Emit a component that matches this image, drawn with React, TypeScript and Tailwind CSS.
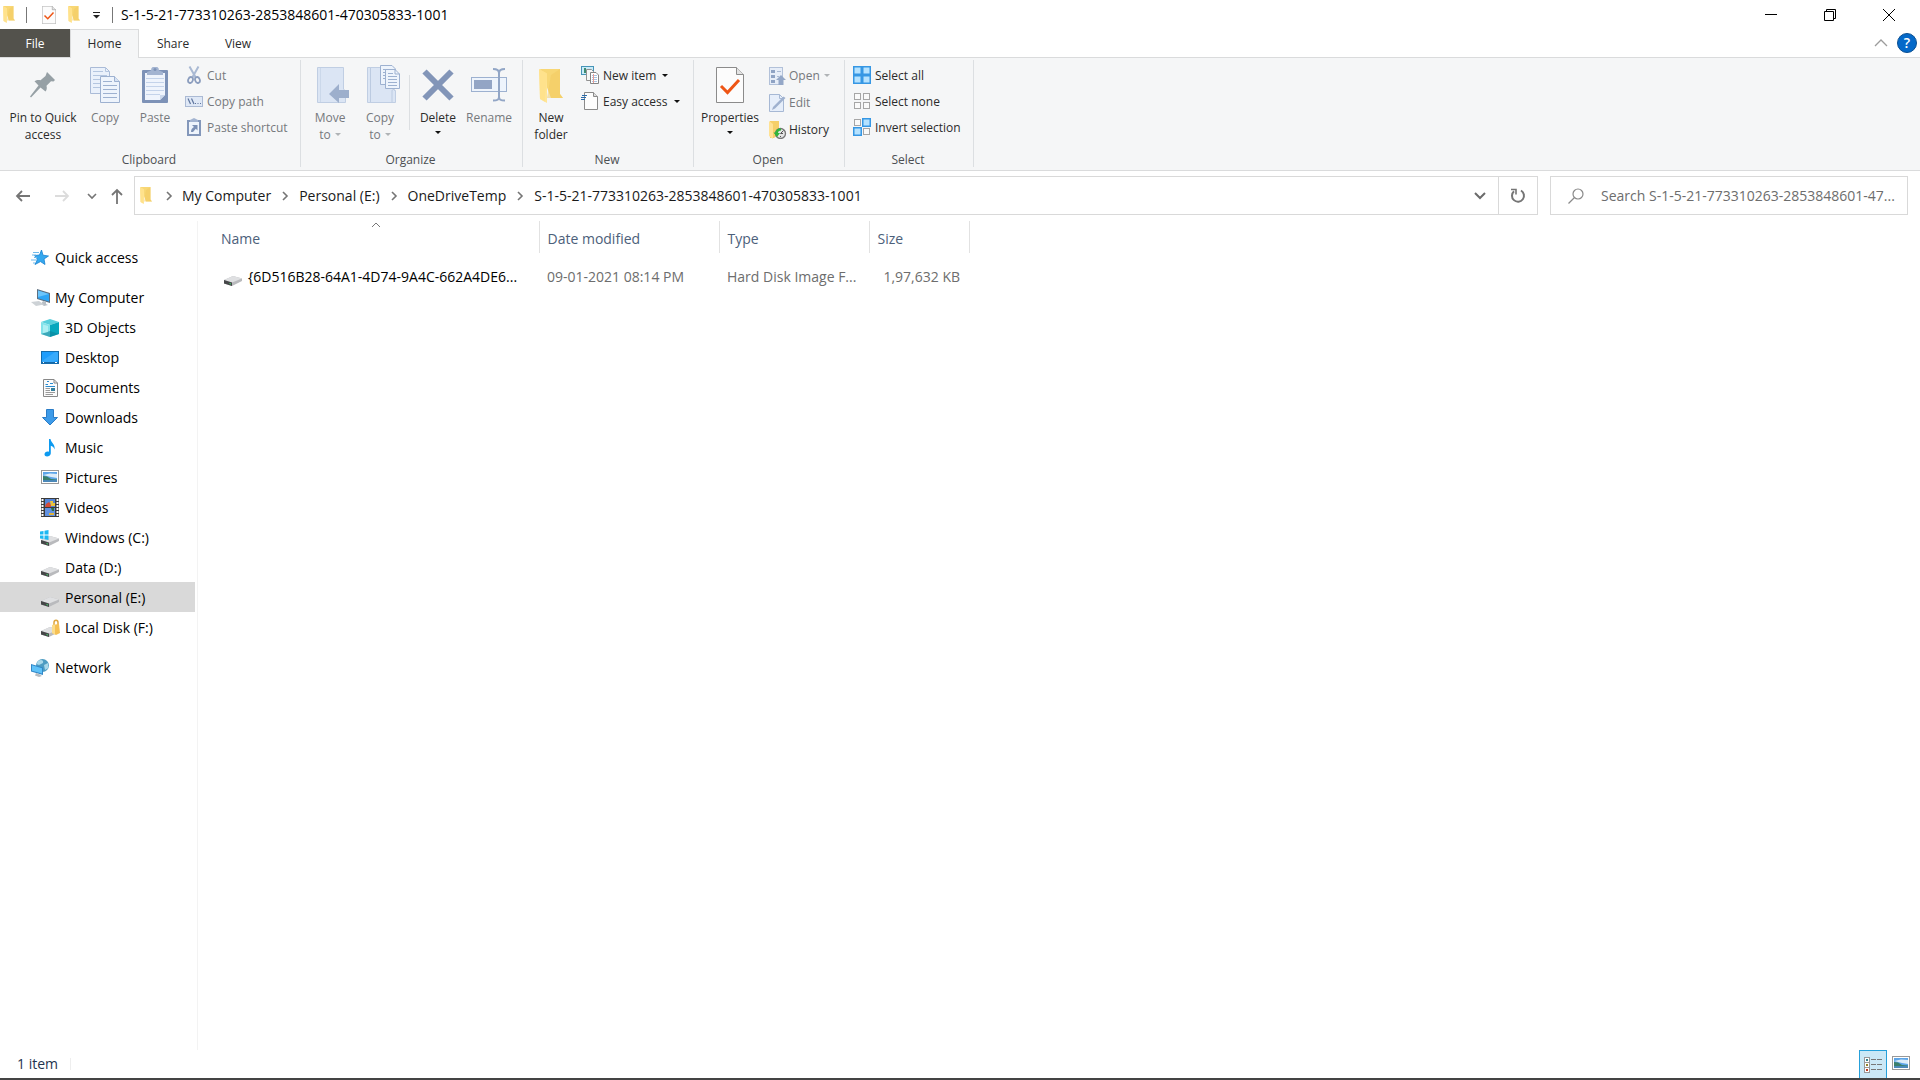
import React from 'react';

type IconProps = { className?: string };

const FolderIcon: React.FC<IconProps> = ({ className = 'w-3 h-[17px]' }) => (
  <svg viewBox="0 0 24 34" preserveAspectRatio="none" className={className}>
    <path d="M1 0H21V25L24 29H12Z" fill="#f8d775" />
    <path d="M12 6L21 0V25L24 29H8Z" fill="#f2ca60" opacity=".5" />
    <path d="M0 0L8 4.500V34L1 30Z" fill="#ffe596" />
    <path d="M0 0L8 4.500V10L6 26V33L1 30Z" fill="#ffdf85" opacity=".6" />
  </svg>
);

const CheckPageIcon: React.FC<IconProps> = ({ className = 'w-[14px] h-[18px]' }) => (
  <svg viewBox="0 0 28 36" className={className}>
    <path d="M.5 .5H20.500L27.500 7.500V35.500H.5Z" fill="#fcfcfc" stroke="#8b8b8b" />
    <path d="M20.500 .5V7.500H27.500" fill="#e3e3e3" stroke="#8b8b8b" />
    <path d="M5 19L11.500 25.500L23 13" fill="none" stroke="#ee5515" strokeWidth="3" />
  </svg>
);

const Caret: React.FC<{ muted?: boolean }> = ({ muted }) => (
  <svg viewBox="0 0 6 3" className="inline-block shrink-0 w-[6px] h-[3px]">
    <path d="M0 0H6L3 3Z" fill={muted ? '#b0b3b6' : '#111'} />
  </svg>
);

const PinIcon = () => (
  <svg viewBox="0 0 28 36" className="w-7 h-9">
    <path d="M18 5L26 13L24.500 14.500L22 14.300L17.500 18.800C18.300 21.500 17.500 23.500 16.500 24.500L11.500 20.500L2 30.500L1 29.500L9.500 18.500L5.500 14.300C7.500 12.800 9.800 12.800 11.500 13.300L16.500 9Z" fill="#96a0a5" />
  </svg>
);

const CopyIcon = () => (
  <svg viewBox="0 0 30 36" className="w-[30px] h-9">
    <path d="M.5 .5H15.500L19.500 4.500V26.500H.5Z" fill="#eaf1fb" stroke="#aabbd7" />
    <path d="M15.500 .5V4.500H19.500M3 4.500H13M3 8.500H17M3 12.500H10M3 16.500H10M3 20.500H10" fill="none" stroke="#b4c6e0" />
    <path d="M10.500 9.500H24.500L29.500 14.500V35.500H10.500Z" fill="#eef4fc" stroke="#9db1d0" />
    <path d="M24.500 9.500V14.500H29.500" fill="#d8e3f3" stroke="#9db1d0" />
    <path d="M13 14.500H22M13 18.500H27M13 22.500H27M13 26.500H27M13 30.500H27" stroke="#9db1d0" />
  </svg>
);

const PasteIcon = () => (
  <svg viewBox="0 0 26 36" className="w-[26px] h-9">
    <rect y="3" width="26" height="33" rx="1" fill="#7d92b7" />
    <path d="M3 6H23V28L18 33H3Z" fill="#eff4fc" />
    <path d="M18 33V28H23Z" fill="#cbd8ec" />
    <path d="M4 11.500H22M4 15.500H22M4 19.500H22M4 23.500H22M4 27.500H18" stroke="#c4d3ea" />
    <path d="M5 8V5L9 3.500A4 4 0 0 1 17 3.500L21 5V8Z" fill="#a3b4d1" />
    <circle cx="13" cy="2.500" r="1.500" fill="#7d92b7" />
  </svg>
);

const MoveToIcon = () => (
  <svg viewBox="0 0 32 36" className="w-8 h-9 ml-[6px]">
    <path d="M.5 .5H26.500V22L28.500 24V35.500H.5Z" fill="#dbe5f4" stroke="#c0cee3" />
    <path d="M3.500 1V35" stroke="#cbd8ea" />
    <path d="M12 27L22 17V23H32V31H22V36Z" fill="#9dafcc" />
  </svg>
);

const CopyToIcon = () => (
  <svg viewBox="0 0 34 38" className="w-[34px] h-[38px] ml-[6px]">
    <path d="M1.500 2.500H27.500V24L29.500 26V37.500H1.500Z" fill="#dbe5f4" stroke="#c0cee3" />
    <path d="M4.500 3V37M26 37V26C26 24 29 24 29 26" fill="none" stroke="#bccbe1" />
    <path d="M14.500 .5H26L29.500 4V19.500H14.500Z" fill="#eef4fc" stroke="#9db1d0" />
    <path d="M17 4.500H25M17 7.500H20M17 10.500H19M17 13.500H19" stroke="#9db1d0" />
    <path d="M19.500 4.500H29L33.500 9V23.500H19.500Z" fill="#eef4fc" stroke="#9db1d0" />
    <path d="M29 4.500V9H33.500M22 8.500H27M22 11.500H31M22 14.500H31M22 17.500H31M22 20.500H31" fill="none" stroke="#9db1d0" />
  </svg>
);

const DeleteIcon = () => (
  <svg viewBox="0 0 32 36" className="w-8 h-9">
    <path d="M2.500 4.500L29.500 31.500M29.500 4.500L2.500 31.500" stroke="#8295b8" strokeWidth="6" />
  </svg>
);

const RenameIcon = () => (
  <svg viewBox="0 0 36 36" className="w-9 h-9">
    <rect x=".5" y="10.500" width="35" height="14" fill="#eef4fc" stroke="#9db1d0" />
    <rect x="3" y="13" width="18" height="9" fill="#93a5c5" />
    <path d="M22 2C26 2 28 3 28 6V30C28 33 26 33.500 22 33.500M34 2C30 2 28 3 28 6V30C28 33 30 33.500 34 33.500" fill="none" stroke="#92a6c6" strokeWidth="2" />
  </svg>
);

const CutIcon = () => (
  <svg viewBox="0 0 18 18" className="w-[18px] h-[18px]">
    <path d="M4.500 .5L11 12M13.500 .5L7 12" fill="none" stroke="#a9b9d3" strokeWidth="2" />
    <ellipse cx="5.500" cy="14" rx="2.300" ry="3" fill="none" stroke="#8b9dbe" strokeWidth="1.800" transform="rotate(20 5.500 14)" />
    <ellipse cx="12.500" cy="14" rx="2.300" ry="3" fill="none" stroke="#8b9dbe" strokeWidth="1.800" transform="rotate(-20 12.500 14)" />
  </svg>
);

const CopyPathIcon = () => (
  <svg viewBox="0 0 18 18" className="w-[18px] h-[18px]">
    <rect x=".5" y="4.500" width="17" height="10" fill="#dfe8f6" stroke="#abbad4" />
    <path d="M3 6.500L5.500 12M6.500 6.500L9 12" stroke="#5f759e" strokeWidth="1.200" />
    <path d="M10 11.500H11M12.500 11.500H13.500M15 11.500H16" stroke="#5f759e" />
  </svg>
);

const PasteShortcutIcon = () => (
  <svg viewBox="0 0 18 18" className="w-[18px] h-[18px]">
    <path d="M2 2H16V18H2Z" fill="#8397ba" />
    <path d="M4 4H14V16H4Z" fill="#eef4fc" />
    <path d="M5 4V2L9 0L13 2V4Z" fill="#a3b4d1" />
    <path d="M7 7H12.500V12.500L10.800 10.800L8 14H6C6 11 7.500 10 9 9Z" fill="#7b90b5" />
  </svg>
);

const NewItemIcon = () => (
  <svg viewBox="0 0 18 18" className="w-[18px] h-[18px]">
    <rect x=".5" y=".5" width="12" height="8" fill="#c9ebf8" stroke="#4694b8" />
    <path d="M3 2V7H5V2Z" fill="#3f8c72" />
    <path d="M5.500 3.500H10.500L12.500 5.500V14.500H5.500Z" fill="#f7f7f7" stroke="#929292" />
    <path d="M9.500 6.500H15L17.500 9V17.500H9.500Z" fill="#fff" stroke="#858585" />
    <path d="M11 9.500H16M11 11.500H16M11 13.500H16M11 15.500H16" stroke="#a8c3e0" />
    <path d="M12.500 8V17" stroke="#e99c96" />
  </svg>
);

const EasyAccessIcon = () => (
  <svg viewBox="0 0 18 18" className="w-[18px] h-[18px]">
    <path d="M3.500 .5H12.500L16.500 4.500V17.500H3.500Z" fill="#fdfdfd" stroke="#8a8a8a" />
    <path d="M12.500 .5V4.500H16.500" fill="#ddd" stroke="#8a8a8a" />
    <path d="M1 3.500H6M0 5.500H5M0 7.500H4" stroke="#2b6cab" strokeWidth="1.200" />
  </svg>
);

const OpenIcon = () => (
  <svg viewBox="0 0 18 18" className="w-[18px] h-[18px]">
    <rect x=".5" y=".5" width="13" height="17" fill="#e6edf8" stroke="#b2c1d9" />
    <path d="M2 3H6V6H2ZM2 8H6V11H2ZM2 13H6V16H2Z" fill="#8fa3c4" />
    <path d="M8 4.500H12M8 9.500H10" stroke="#a9b9d3" />
    <path d="M12 8L17 13H14.500V18H9.500V13H7Z" fill="#94a7c7" />
  </svg>
);

const EditIcon = () => (
  <svg viewBox="0 0 18 18" className="w-[18px] h-[18px]">
    <path d="M.5 .5H10.500L14.500 4.500V17.500H.5Z" fill="#e6eefa" stroke="#a6b8d4" />
    <path d="M10.500 .5V4.500H14.500" fill="none" stroke="#a6b8d4" />
    <path d="M3 16L4 13L14.500 2.500L16.500 4L6 14.500Z" fill="#9fb1cf" />
  </svg>
);

const HistoryIcon = () => (
  <svg viewBox="0 0 18 18" className="w-[18px] h-[18px]">
    <path d="M1 0H10V13L5 17H1Z" fill="#f5cf69" />
    <path d="M0 0L4 3V18L0 15Z" fill="#ffe294" />
    <circle cx="11.500" cy="12.500" r="5" fill="#e4e4e4" stroke="#777" strokeWidth="1.300" />
    <path d="M11.500 12.500L14.500 9.500M11.500 12.500H14M11.500 15V16" stroke="#555" />
    <path d="M12 7.500C8.500 7 6.500 9 6.500 11.500H4.500L8 16L11 12H9C9 10.500 10 9.500 12 9.500Z" fill="#2fb53a" />
  </svg>
);

const SelectIcon: React.FC<{ on: boolean[] }> = ({ on }) => (
  <svg viewBox="0 0 18 18" className="w-[18px] h-[18px]">
    {on.map((active, i) => {
      const col = i % 2;
      const row = Math.floor(i / 2);
      return active ? (
        <rect key={i} x={col * 9 + 0.75} y={row * 9 + 0.75} width="7.500" height="7.500" fill="#b5e2ff" stroke="#3697e4" strokeWidth="1.500" />
      ) : (
        <rect key={i} x={col * 9 + 1.5} y={row * 9 + 1.5} width="6" height="6" fill="#fafafa" stroke="#a6a6a6" />
      );
    })}
  </svg>
);

const DriveShape = () => (
  <g>
    <path d="M0 12L9 8L18 10.500V13L8 18L0 15.500Z" fill="#b9babd" />
    <path d="M0 12L9 8L18 10.500L8 14.500Z" fill="#dfe0e2" />
    <path d="M0 12L8 14.500V18L0 15.500Z" fill="#454748" />
    <path d="M5.500 15L7 15.500V16.500L5.500 16Z" fill="#44d96d" />
  </g>
);

const DriveIcon = () => (
  <svg viewBox="0 0 18 18" className="w-[18px] h-[18px]">
    <DriveShape />
  </svg>
);

const WindowsDriveIcon = () => (
  <svg viewBox="0 0 18 18" className="w-[18px] h-[18px] overflow-visible">
    <g transform="translate(0 -1)"><DriveShape /></g>
    <path d="M-1 2.500L2.500 2V5.500H-1ZM3.500 1.800L7.500 1V5.500H3.500ZM-1 6.500H2.500V10L-1 9.500ZM3.500 6.500H7.500V11L3.500 10.200Z" fill="#1cb8f2" />
  </svg>
);

const LockedDriveIcon = () => (
  <svg viewBox="0 0 18 18" className="w-[18px] h-[18px] overflow-visible">
    <DriveShape />
    <path d="M13 7V3.500C13 .5 17 .5 17 3.500V7" fill="none" stroke="#dfa63e" strokeWidth="1.500" />
    <path d="M11 6L18 5L19 14L15 16L11 14Z" fill="#f5c053" />
    <path d="M11 6L14 5.500V15.500L11 14Z" fill="#fbdc8a" />
  </svg>
);

const QuickAccessIcon = () => (
  <svg viewBox="0 0 18 18" className="w-[18px] h-[18px]">
    <path d="M10.500 1L12 6.200L17.500 7L13 10L14 15.500L9.500 12.600L4 15.500L6.500 10.300L3.500 6.500L8.500 6Z" fill="#35a8ef" stroke="#1681d0" strokeWidth=".8" />
    <path d="M2 3.500H8M1 6H5M3 8.500H6M0 11H6M2 14H4" stroke="#6fb9ea" />
  </svg>
);

const ComputerIcon = () => (
  <svg viewBox="0 0 20 18" className="w-5 h-[18px]">
    <path d="M6 0L19 4V14L6 10Z" fill="#5d6f80" />
    <path d="M7 1.500L18 5V12.500L7 9.200Z" fill="#2ea5f5" />
    <path d="M7 1.500L18 5L7 8Z" fill="#6cc5fb" />
    <path d="M12 12L15 13V15L17 16L13 17L10 15Z" fill="#b9bfc5" />
    <path d="M0 13L8 12L13 15.500L5 17Z" fill="#cdd2d6" />
  </svg>
);

const ObjectsIcon = () => (
  <svg viewBox="0 0 18 18" className="w-[18px] h-[18px]">
    <path d="M0 3L9 0L18 3L9 6Z" fill="#58cfdc" />
    <path d="M0 3L9 6V18L0 15Z" fill="#82e2ea" />
    <path d="M18 3L9 6V18L18 15Z" fill="#08a7bd" />
    <path d="M9 12L18 15L9 18L0 15Z" fill="#0b8299" opacity=".6" />
    <path d="M2 5.500L7 7V13L2 14Z" fill="#b9f2f5" opacity=".8" />
  </svg>
);

const DesktopIcon = () => (
  <svg viewBox="0 0 18 18" className="w-[18px] h-[18px]">
    <rect x=".5" y="2.500" width="17" height="12" fill="#1f9dfb" stroke="#156bab" />
    <path d="M1 12L14 3H17V11L10 14H1Z" fill="#4ab2fc" opacity=".6" />
    <path d="M1 13.500H17" stroke="#1467a6" />
    <path d="M2 13.500H3M14 13.500H16" stroke="#fff" />
  </svg>
);

const DocumentsIcon = () => (
  <svg viewBox="0 0 18 18" className="w-[18px] h-[18px]">
    <path d="M2.500 .5H13L16.500 4V17.500H2.500Z" fill="#fbfbfb" stroke="#888" />
    <path d="M13 .5V4H16.500" fill="none" stroke="#888" />
    <path d="M6 2.500H8M9 4.500H12M4.500 5.500H7M4.500 7.500H14" stroke="#2a8bd0" />
    <path d="M4.500 9.500H9M4.500 11.500H9M4.500 13.500H14M4.500 15.500H12" stroke="#9a9a9a" />
    <rect x="10" y="9" width="4" height="3" fill="#357f9c" />
  </svg>
);

const DownloadsIcon = () => (
  <svg viewBox="0 0 18 18" className="w-[18px] h-[18px]">
    <path d="M5.500 .5H12.500V8.500H16.500L9 16L1.500 8.500H5.500Z" fill="#3d9be9" stroke="#2a7cc7" />
  </svg>
);

const MusicIcon = () => (
  <svg viewBox="0 0 18 18" className="w-[18px] h-[18px]">
    <path d="M8 0H9.500C10 4 14.500 5 13.500 10.500C13 8.500 11.500 7 9.800 6.800V14.500C9.500 18 3.500 18.500 3.500 15.500C3.500 13 6 12 8 12.800Z" fill="#0c9af0" />
  </svg>
);

const PicturesIcon: React.FC<IconProps> = ({ className = 'w-[18px] h-[18px]' }) => (
  <svg viewBox="0 0 18 18" className={className}>
    <rect x=".5" y="1.500" width="17" height="13" fill="#fff" stroke="#999" />
    <rect x="2" y="3" width="14" height="10" fill="#5da5e8" />
    <path d="M2 6L9 4.500L16 5V9L10 8Z" fill="#dcecf8" />
    <path d="M2 7L6 7.500L10 10L16 10.500V11.500H2Z" fill="#3a7f6b" />
    <path d="M2 11H16V13H2Z" fill="#4b88b8" />
  </svg>
);

const VideosIcon = () => (
  <svg viewBox="0 0 18 20" className="w-[18px] h-5">
    <rect width="18" height="19" fill="#3b3b3b" />
    <path d="M1.500 1V19M16.500 1V19" stroke="#fff" strokeWidth="2" strokeDasharray="2 1" />
    <rect x="4" y="1" width="10" height="8" fill="#5585d6" />
    <rect x="4" y="10" width="10" height="8" fill="#6292e2" />
    <path d="M5 6L8 4L10 7V9H4Z" fill="#d84a34" />
    <path d="M9 3H12V5H14V8H10Z" fill="#eac33c" />
    <path d="M8 15H13V17H8Z" fill="#e2b338" />
    <path d="M10 10H13V13H11Z" fill="#2f7140" />
  </svg>
);

const NetworkIcon = () => (
  <svg viewBox="0 0 20 18" className="w-5 h-[18px]">
    <circle cx="11.500" cy="6.500" r="6.500" fill="#4d9cc2" />
    <path d="M7 2C10 0 13 1 12 4L8 6L5.500 5ZM13 6L17 4L17.500 9L14 11Z" fill="#a9d8ea" />
    <path d="M0 5L12 8.500V16L0 12.500Z" fill="#3087c8" />
    <path d="M1 6.300L11 9.300V14.600L1 11.700Z" fill="#5fc2f8" />
    <path d="M5 14L8 15L11 17L8 18L4 16.500Z" fill="#b5bcc2" />
  </svg>
);

const DetailsIcon = () => (
  <svg viewBox="0 0 20 18" className="w-5 h-[18px]">
    {[1, 6, 11].map((y) => (
      <g key={y}>
        <rect x="1.500" y={y + 0.5} width="5" height="5" fill="#fff" stroke="#999" />
        <path d={`M8 ${y + 2.5}H13M14 ${y + 2.5}H19`} stroke="#777" />
      </g>
    ))}
    <rect x="3" y="3" width="2" height="2" fill="#33818d" />
    <rect x="3" y="8" width="2" height="2" fill="#95832c" />
    <rect x="3" y="13" width="2" height="2" fill="#c33c1e" />
  </svg>
);

const Chevron: React.FC<IconProps> = ({ className = '' }) => (
  <svg viewBox="0 0 10 10" className={`w-[10px] h-[10px] shrink-0 ${className}`}>
    <path d="M3 1L7 5L3 9" fill="none" stroke="#757575" strokeWidth="1.600" />
  </svg>
);

type BigButtonProps = {
  icon: React.ReactNode;
  width: string;
  lines: string[];
  caret?: 'inline' | 'below';
  muted?: boolean;
};

const BigButton: React.FC<BigButtonProps> = ({ icon, width, lines, caret, muted }) => (
  <button className={`flex flex-col items-center ${width} ${muted ? 'text-[#76797d]' : 'text-[#2b2b2b]'}`}>
    <span className="flex items-end justify-center h-9 mb-[6px]">{icon}</span>
    {lines.map((line, i) => (
      <span key={line} className="flex items-center gap-1 leading-[17px] whitespace-nowrap">
        {line}
        {caret === 'inline' && i === lines.length - 1 && <Caret muted={muted} />}
      </span>
    ))}
    {caret === 'below' && (
      <span className="flex items-center h-3">
        <Caret />
      </span>
    )}
  </button>
);

type SmallButtonProps = {
  icon: React.ReactNode;
  label: string;
  caret?: boolean;
  muted?: boolean;
  size?: string;
};

const SmallButton: React.FC<SmallButtonProps> = ({ icon, label, caret, muted, size = 'h-[26px] gap-1' }) => (
  <button className={`flex items-center whitespace-nowrap ${size} ${muted ? 'text-[#76797d]' : 'text-[#2b2b2b]'}`}>
    {icon}
    <span className="pt-px mr-[2px]">{label}</span>
    {caret && <Caret muted={muted} />}
  </button>
);

const RibbonGroup: React.FC<{ title: string; width: string; children: React.ReactNode }> = ({ title, width, children }) => (
  <section className={`flex flex-col justify-between border-r border-[#dcdfe2] mt-[2px] mb-[3px] ${width}`}>
    <div className="flex items-start pl-1">{children}</div>
    <h2 className="pr-[2px] text-center text-[#4c4f52] leading-[15px]">{title}</h2>
  </section>
);

const crumbs = ['My Computer', 'Personal (E:)', 'OneDriveTemp', 'S-1-5-21-773310263-2853848601-470305833-1001'];

const places = [
  { name: '3D Objects', icon: <ObjectsIcon /> },
  { name: 'Desktop', icon: <DesktopIcon /> },
  { name: 'Documents', icon: <DocumentsIcon /> },
  { name: 'Downloads', icon: <DownloadsIcon /> },
  { name: 'Music', icon: <MusicIcon /> },
  { name: 'Pictures', icon: <PicturesIcon /> },
  { name: 'Videos', icon: <VideosIcon /> },
  { name: 'Windows (C:)', icon: <WindowsDriveIcon /> },
  { name: 'Data (D:)', icon: <DriveIcon /> },
  { name: 'Personal (E:)', icon: <DriveIcon />, active: true },
  { name: 'Local Disk (F:)', icon: <LockedDriveIcon /> },
];

const TitleBar = () => (
  <header className="flex items-center h-[29px] pl-[3px] pr-[2px]">
    <FolderIcon />
    <span className="w-px h-4 ml-[11px] bg-[#777]" />
    <button aria-label="Properties" className="ml-[15px]"><CheckPageIcon /></button>
    <button aria-label="New folder" className="ml-3"><FolderIcon /></button>
    <button aria-label="Customize Quick Access Toolbar" className="ml-3">
      <svg viewBox="0 0 8 8" className="w-2 h-2">
        <path d="M1 1.500H8" stroke="#222" />
        <path d="M1 4H8L4.500 7.500Z" fill="#222" />
      </svg>
    </button>
    <span className="w-px h-4 ml-3 bg-[#777]" />
    <h1 className="ml-2 grow text-black">S-1-5-21-773310263-2853848601-470305833-1001</h1>
    <button aria-label="Minimize" className="flex items-center justify-center w-[59px] h-full">
      <svg viewBox="0 0 12 12" className="w-3 h-3"><path d="M0 5.500H12" stroke="#000" /></svg>
    </button>
    <button aria-label="Restore" className="flex items-center justify-center w-[59px] h-full">
      <svg viewBox="0 0 12 12" className="w-3 h-3">
        <path d="M.5 2.500H9.500V11.500H.5ZM2.500 2.500V.5H11.500V9.500H9.500" fill="none" stroke="#000" />
      </svg>
    </button>
    <button aria-label="Close" className="flex items-center justify-center w-[59px] h-full">
      <svg viewBox="0 0 12 12" className="w-3 h-3"><path d="M0 0L12 12M12 0L0 12" stroke="#000" /></svg>
    </button>
  </header>
);

const Tabs = () => (
  <nav className="flex items-stretch h-[29px] border-b border-[#dadbdc] text-[12px] text-[#2b2b2b]">
    <button className="w-[70px] pt-[2px] bg-[#53524c] text-white">File</button>
    <button className="w-[69px] -mb-px border border-b-0 border-[#dadbdc] bg-[#f5f6f7]">Home</button>
    <button className="w-[68px] pt-[2px]">Share</button>
    <button className="w-[62px] pt-[2px]">View</button>
    <button aria-label="Minimize the Ribbon" className="ml-auto mr-[9px]">
      <svg viewBox="0 0 14 8" className="w-[14px] h-2"><path d="M1 7L7 1L13 7" fill="none" stroke="#9c9c9c" strokeWidth="1.300" /></svg>
    </button>
    <button aria-label="Help" className="self-center mr-[3px] w-5 h-5 rounded-full border border-[#0a4f92] bg-[#0469c9] text-[14px] leading-[18px] font-semibold text-white">?</button>
  </nav>
);

const Ribbon = () => (
  <div className="flex h-[113px] border-b border-[#dadbdc] bg-[#f5f6f7] text-[12px]">
    <RibbonGroup title="Clipboard" width="w-[301px]">
      <div className="flex pt-[7px] pl-[2px]">
        <BigButton icon={<PinIcon />} width="w-[74px]" lines={['Pin to Quick', 'access']} />
        <BigButton icon={<CopyIcon />} width="w-[50px]" lines={['Copy']} muted />
        <BigButton icon={<PasteIcon />} width="w-[50px]" lines={['Paste']} muted />
      </div>
      <div className="flex flex-col items-start pl-[5px] pt-[2px]">
        <SmallButton icon={<CutIcon />} label="Cut" muted />
        <SmallButton icon={<CopyPathIcon />} label="Copy path" muted />
        <SmallButton icon={<PasteShortcutIcon />} label="Paste shortcut" muted />
      </div>
    </RibbonGroup>
    <RibbonGroup title="Organize" width="w-[222px]">
      <div className="flex pt-[7px]">
        <BigButton icon={<MoveToIcon />} width="w-[50px]" lines={['Move', 'to']} caret="inline" muted />
        <BigButton icon={<CopyToIcon />} width="w-[50px]" lines={['Copy', 'to']} caret="inline" muted />
        <span className="w-px h-[55px] mt-2 ml-1 mr-[3px] bg-[#dcdfe2]" />
        <BigButton icon={<DeleteIcon />} width="w-[50px]" lines={['Delete']} caret="below" />
        <BigButton icon={<RenameIcon />} width="w-[52px]" lines={['Rename']} muted />
      </div>
    </RibbonGroup>
    <RibbonGroup title="New" width="w-[171px]">
      <div className="flex pt-[7px]">
        <BigButton icon={<FolderIcon className="w-6 h-[34px]" />} width="w-[48px]" lines={['New', 'folder']} />
      </div>
      <div className="flex flex-col items-start pl-[6px] pt-[2px]">
        <SmallButton icon={<NewItemIcon />} label="New item" caret />
        <SmallButton icon={<EasyAccessIcon />} label="Easy access" caret />
      </div>
    </RibbonGroup>
    <RibbonGroup title="Open" width="w-[151px]">
      <div className="flex pt-[7px]">
        <BigButton icon={<CheckPageIcon className="w-7 h-9" />} width="w-[64px]" lines={['Properties']} caret="below" />
      </div>
      <div className="flex flex-col items-start pl-[7px] pt-[2px]">
        <SmallButton icon={<OpenIcon />} label="Open" size="h-[27px] gap-[2px]" caret muted />
        <SmallButton icon={<EditIcon />} label="Edit" size="h-[27px] gap-[2px]" muted />
        <SmallButton icon={<HistoryIcon />} label="History" size="h-[27px] gap-[2px]" />
      </div>
    </RibbonGroup>
    <RibbonGroup title="Select" width="w-[129px]">
      <div className="flex flex-col items-start pl-1 pt-[2px]">
        <SmallButton icon={<SelectIcon on={[true, true, true, true]} />} label="Select all" />
        <SmallButton icon={<SelectIcon on={[false, false, false, false]} />} label="Select none" />
        <SmallButton icon={<SelectIcon on={[false, true, true, false]} />} label="Invert selection" />
      </div>
    </RibbonGroup>
  </div>
);

const AddressBar = () => (
  <div className="flex items-center pt-[5px] pb-[6px] pr-3">
    <div className="flex items-center justify-between w-[134px] pl-[15px] pr-[10px]">
      <button aria-label="Back">
        <svg viewBox="0 0 16 14" className="w-4 h-[14px]"><path d="M15 7H2M7 2L2 7L7 12" fill="none" stroke="#757575" strokeWidth="1.800" /></svg>
      </button>
      <button aria-label="Forward" className="ml-[22px]">
        <svg viewBox="0 0 16 14" className="w-4 h-[14px]"><path d="M1 7H14M9 2L14 7L9 12" fill="none" stroke="#dcdcdc" strokeWidth="1.800" /></svg>
      </button>
      <button aria-label="Recent locations" className="ml-[17px]"><Chevron className="rotate-90" /></button>
      <button aria-label="Up" className="ml-3">
        <svg viewBox="0 0 14 16" className="w-[14px] h-4"><path d="M7 16V2M2 7L7 2L12 7" fill="none" stroke="#757575" strokeWidth="1.800" /></svg>
      </button>
    </div>
    <div className="flex items-center grow h-[39px] border border-[#d9d9d9] pl-[5px]">
      <FolderIcon />
      {crumbs.map((crumb, i) => (
        <React.Fragment key={crumb}>
          <Chevron className={i === 0 ? 'ml-3 mr-2' : 'mx-[9px]'} />
          <a href="#" className="whitespace-nowrap text-[#1a1a1a]">{crumb}</a>
        </React.Fragment>
      ))}
      <button aria-label="Previous locations" className="ml-auto px-3">
        <svg viewBox="0 0 12 8" className="w-3 h-2"><path d="M1 1L6 6L11 1" fill="none" stroke="#6b6b6b" strokeWidth="2" /></svg>
      </button>
      <button aria-label="Refresh" className="flex items-center justify-center w-[39px] h-full border-l border-[#d9d9d9]">
        <svg viewBox="0 0 16 16" className="w-4 h-4">
          <path d="M11 2.500A6 6 0 1 1 4 3.200" fill="none" stroke="#757575" strokeWidth="2" />
          <path d="M1 1.500H6V6.500" fill="none" stroke="#757575" strokeWidth="1.600" />
        </svg>
      </button>
    </div>
    <label className="flex items-center w-[358px] h-[39px] ml-3 border border-[#d9d9d9] pl-[17px]">
      <svg viewBox="0 0 16 16" className="w-4 h-4 shrink-0">
        <circle cx="10" cy="6" r="5" fill="none" stroke="#8a8a8a" strokeWidth="1.200" />
        <path d="M6.500 9.500L.5 15.500" stroke="#8a8a8a" strokeWidth="1.200" />
      </svg>
      <input
        type="text"
        aria-label="Search"
        placeholder="Search S-1-5-21-773310263-2853848601-47..."
        className="grow min-w-0 ml-[17px] bg-transparent outline-none placeholder:text-[#6d6d6d]"
      />
    </label>
  </div>
);

const Sidebar = () => (
  <aside className="w-[198px] shrink-0 border-r border-[#f3f3f3] pt-[21px] pr-[2px] text-black">
    <a href="#" className="flex items-center h-[30px] pl-[31px] pt-px mb-[10px]">
      <QuickAccessIcon />
      <span className="ml-[6px]">Quick access</span>
    </a>
    <a href="#" className="flex items-center h-[30px] pl-[31px] pt-px">
      <ComputerIcon />
      <span className="ml-1">My Computer</span>
    </a>
    <ul className="mb-[10px]">
      {places.map((place) => (
        <li key={place.name}>
          <a href="#" className={`flex items-center h-[30px] pl-[41px] pt-px ${place.active ? 'bg-[#d9d9d9]' : ''}`}>
            {place.icon}
            <span className="ml-[6px]">{place.name}</span>
          </a>
        </li>
      ))}
    </ul>
    <a href="#" className="flex items-center h-[30px] pl-[31px] pt-px">
      <NetworkIcon />
      <span className="ml-1">Network</span>
    </a>
  </aside>
);

const FileList = () => (
  <main className="grow">
    <table className="table-fixed w-[771px] text-left">
      <colgroup>
        <col className="w-[341px]" />
        <col className="w-[180px]" />
        <col className="w-[150px]" />
        <col className="w-[100px]" />
      </colgroup>
      <thead>
        <tr className="h-8 text-[#4c607a]">
          <th className="relative font-normal pl-[23px] pt-1 border-r border-[#e2e2e2]">
            <svg viewBox="0 0 10 6" className="absolute top-px left-[173px] w-[10px] h-[6px]">
              <path d="M1 5L5 1L9 5" fill="none" stroke="#777" />
            </svg>
            Name
          </th>
          <th className="font-normal pl-2 pt-1 border-r border-[#e2e2e2]">Date modified</th>
          <th className="font-normal pl-2 pt-1 border-r border-[#e2e2e2]">Type</th>
          <th className="font-normal pl-2 pt-1 border-r border-[#e2e2e2]">Size</th>
        </tr>
      </thead>
      <tbody>
        <tr className="h-12 text-[#6d6d6d] whitespace-nowrap">
          <td className="pl-[26px] text-black">
            <span className="flex items-center">
              <DriveIcon />
              <span className="ml-[6px]">{'{6D516B28-64A1-4D74-9A4C-662A4DE6...'}</span>
            </span>
          </td>
          <td className="pl-2">09-01-2021 08:14 PM</td>
          <td className="pl-2">Hard Disk Image F...</td>
          <td className="pr-[9px] text-right">1,97,632 KB</td>
        </tr>
      </tbody>
    </table>
  </main>
);

const StatusBar = () => (
  <footer className="flex items-center h-[30px] border-b-2 border-[#444] pl-[17px] pr-[10px]">
    <span className="text-[#24344e]">1 item</span>
    <span className="w-px h-3 ml-3 bg-[#eee]" />
    <button aria-label="Details view" className="flex items-center justify-center ml-auto w-7 h-full border border-b-0 border-[#26a0da] bg-[#cbe8f6]">
      <DetailsIcon />
    </button>
    <button aria-label="Large thumbnails" className="ml-[5px]"><PicturesIcon /></button>
  </footer>
);

const App: React.FC = () => {
  return (
    <div className="flex flex-col min-h-screen bg-white font-['Open_Sans','Noto_Sans',sans-serif] text-[14px] leading-5">
      <TitleBar />
      <Tabs />
      <Ribbon />
      <AddressBar />
      <div className="flex grow">
        <Sidebar />
        <FileList />
      </div>
      <StatusBar />
    </div>
  );
};

export default App;
